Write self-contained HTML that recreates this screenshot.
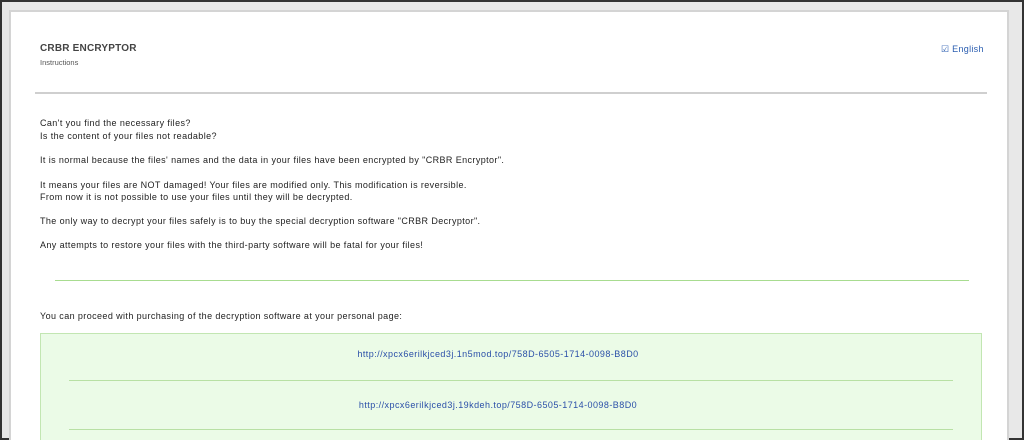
<!DOCTYPE html>
<html><head><meta charset="utf-8"><style>
html,body{margin:0;padding:0;width:1024px;height:440px;overflow:hidden;}
body{background:#e8e8e8;font-family:"Liberation Sans",sans-serif;position:relative;}
.frame{position:absolute;left:0;top:0;width:1020px;height:436px;border:2px solid #333;background:#e8e8e8;}
.page{position:absolute;left:9px;top:10px;width:996px;height:428px;overflow:hidden;background:#fff;border:2px solid #d4d4d4;border-bottom:none;}
.t{position:absolute;font-size:9px;color:#222;white-space:nowrap;letter-spacing:0.4px;}
h1{position:absolute;left:29px;top:31px;margin:0;font-size:10px;color:#444;font-weight:bold;letter-spacing:0.2px;}
.sub{position:absolute;left:29px;top:46px;font-size:7.5px;color:#555;}
.lang{position:absolute;left:930px;top:32px;font-size:9px;color:#2a5db0;letter-spacing:0.3px;}
.hr1{position:absolute;left:24px;top:80px;width:952px;height:2px;background:#cfcfcf;}
.hr2{position:absolute;left:44px;top:268px;width:914px;height:1px;background:#a8dc90;}
.box{position:absolute;left:29px;top:321px;width:940px;height:120px;background:#ebfbe7;border:1px solid #c2e6b2;}
.link{position:absolute;left:-13px;width:100%;text-align:center;font-size:9px;color:#2a4fa8;letter-spacing:0.45px;}
.ghr{position:absolute;left:28px;width:884px;height:1px;background:#b8e0a4;}
</style></head><body>
<div class="frame"></div>
<div class="page">
<h1>CRBR ENCRYPTOR</h1>
<div class="sub">Instructions</div>
<div class="lang">☑ English</div>
<div class="hr1"></div>
<div class="t" style="left:29px;top:106px">Can't you find the necessary files?</div>
<div class="t" style="left:29px;top:119px">Is the content of your files not readable?</div>
<div class="t" style="left:29px;top:143px">It is normal because the files' names and the data in your files have been encrypted by "CRBR Encryptor".</div>
<div class="t" style="left:29px;top:168px">It means your files are NOT damaged! Your files are modified only. This modification is reversible.</div>
<div class="t" style="left:29px;top:180px">From now it is not possible to use your files until they will be decrypted.</div>
<div class="t" style="left:29px;top:204px">The only way to decrypt your files safely is to buy the special decryption software "CRBR Decryptor".</div>
<div class="t" style="left:29px;top:228px">Any attempts to restore your files with the third-party software will be fatal for your files!</div>
<div class="hr2"></div>
<div class="t" style="left:29px;top:299px">You can proceed with purchasing of the decryption software at your personal page:</div>
<div class="box">
<div class="link" style="top:15px">http://xpcx6erilkjced3j.1n5mod.top/758D-6505-1714-0098-B8D0</div>
<div class="ghr" style="top:46px"></div>
<div class="link" style="top:66px">http://xpcx6erilkjced3j.19kdeh.top/758D-6505-1714-0098-B8D0</div>
<div class="ghr" style="top:95px"></div>
</div>
</div>
</body></html>
